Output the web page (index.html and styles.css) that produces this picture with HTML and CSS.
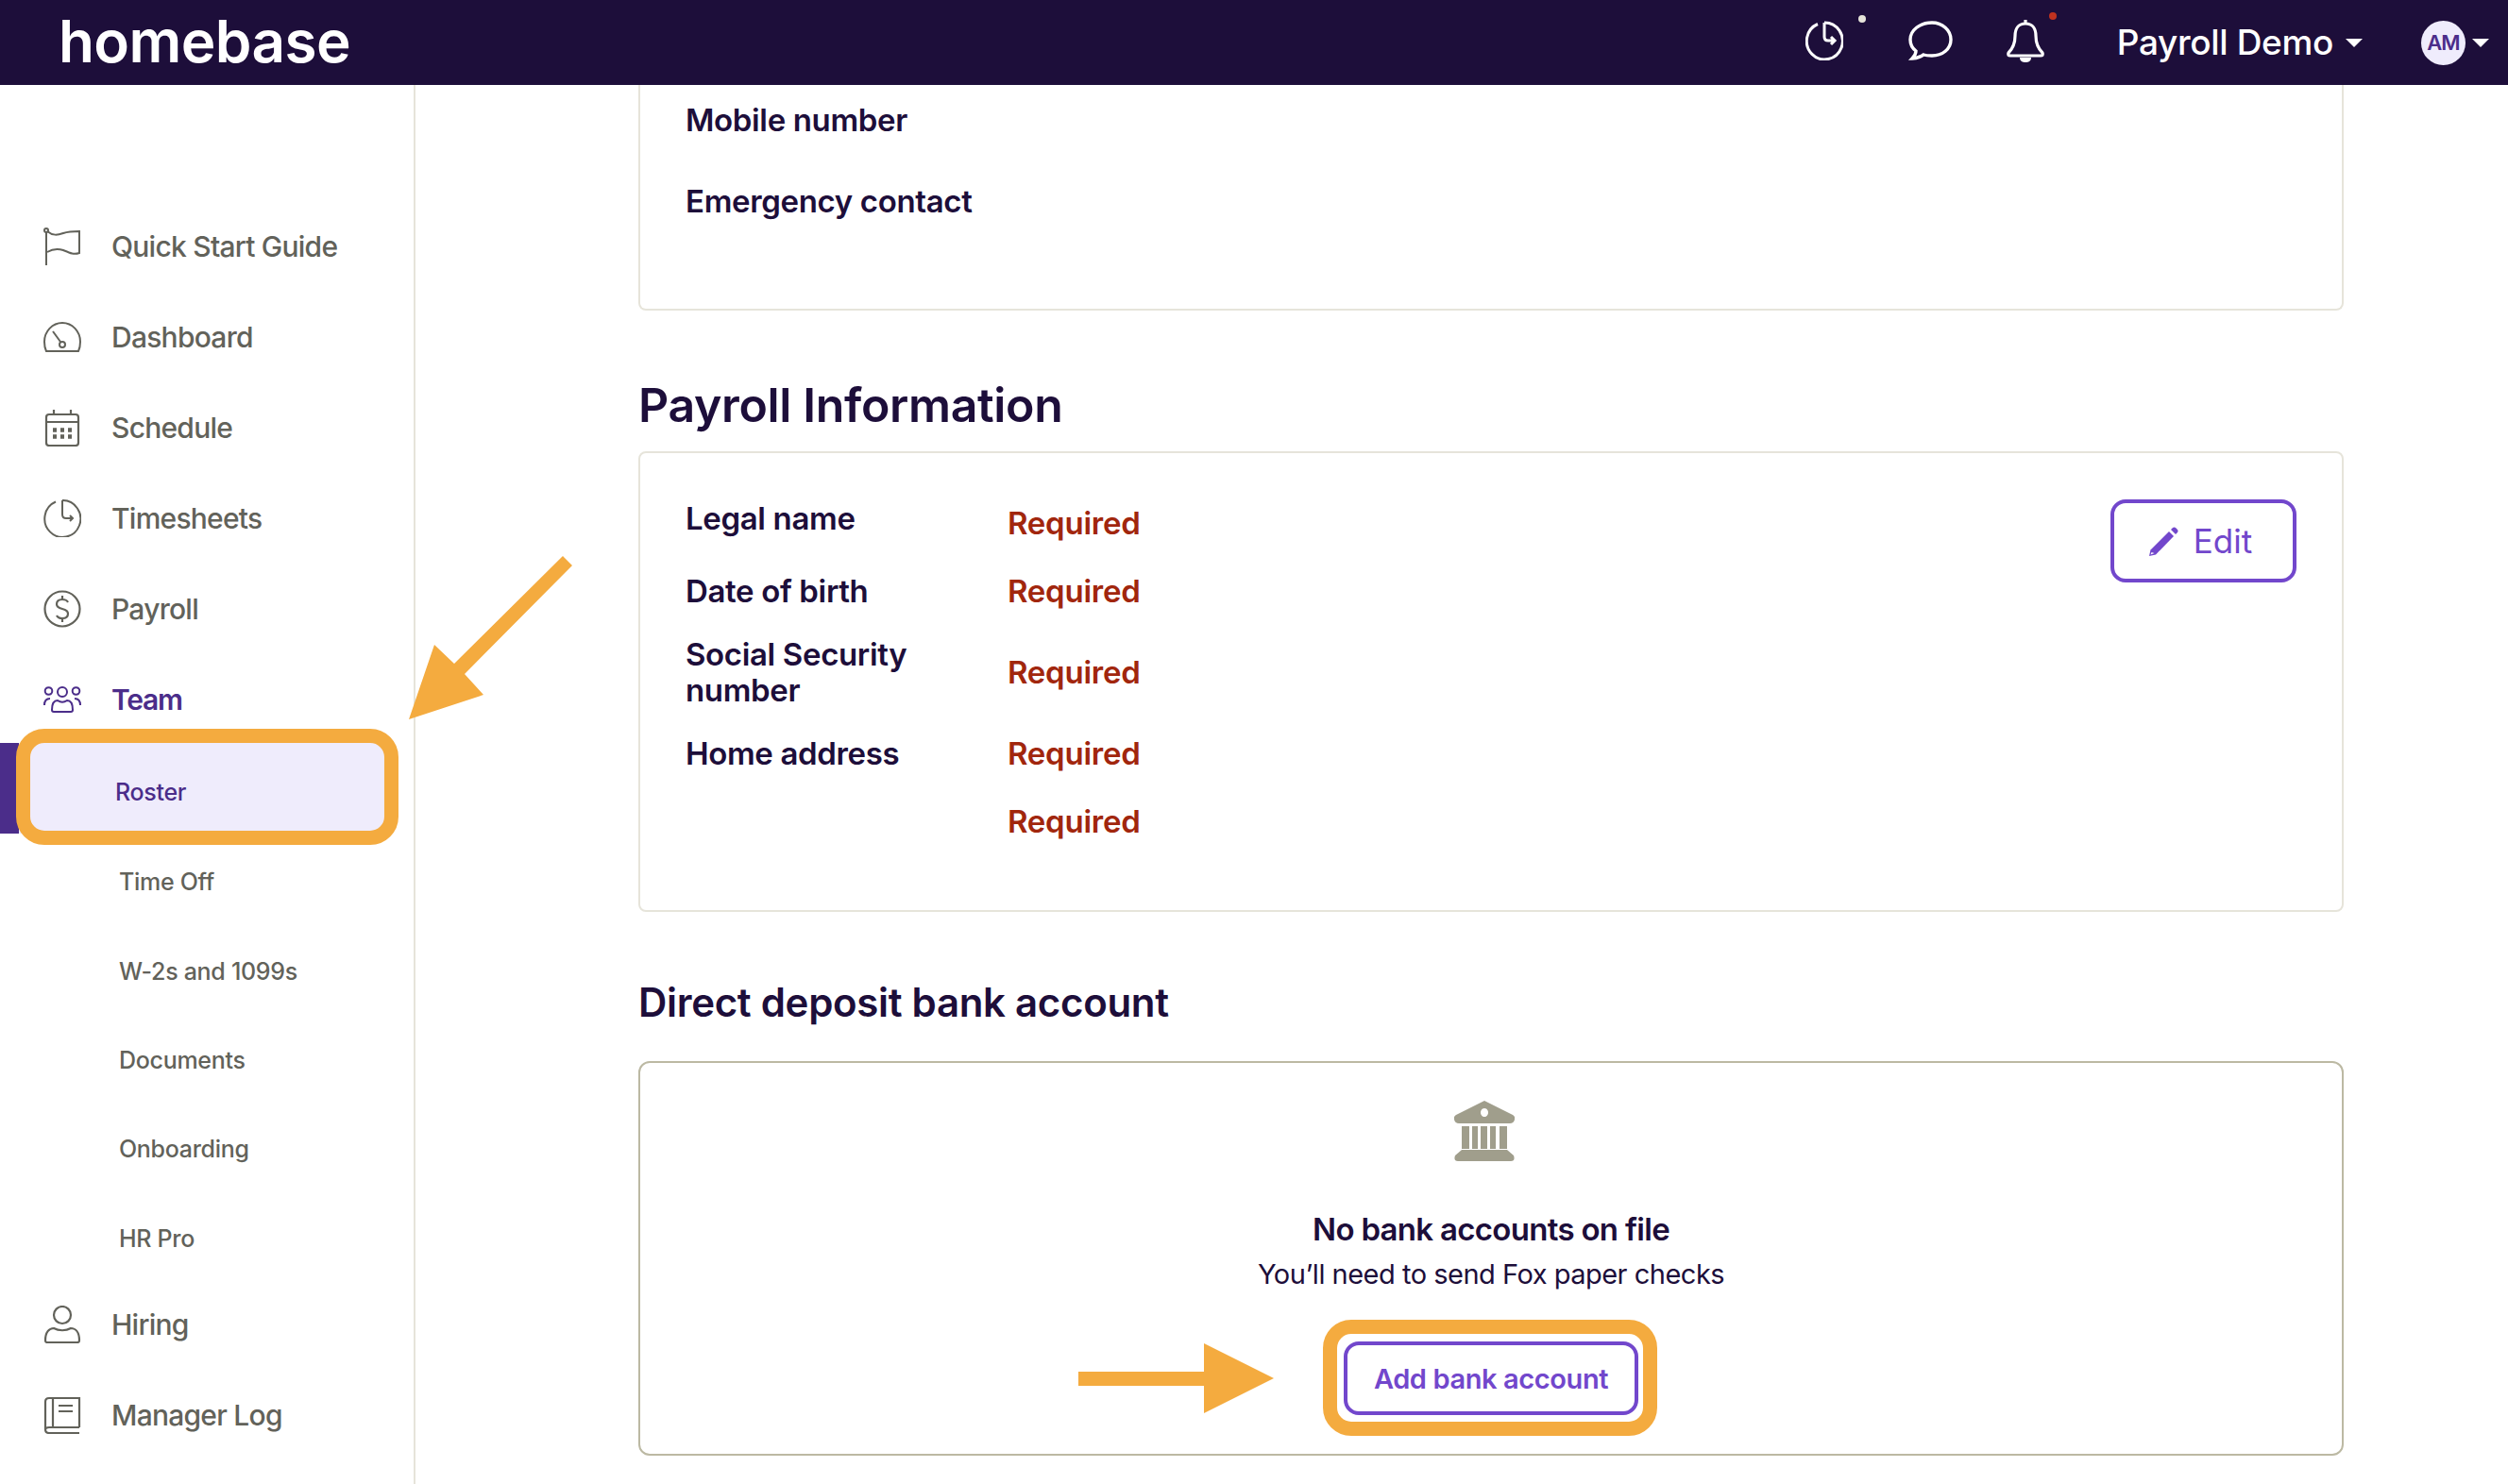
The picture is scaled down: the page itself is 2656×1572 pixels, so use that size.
FILE: index.html
```html
<!DOCTYPE html>
<html lang="en">
<head>
  <meta charset="UTF-8">
  <title>Roster - Payroll Information</title>
  <link rel="stylesheet" href="styles.css">
</head>
<body>

  <header class="topbar">
    <div class="logo">homebase</div>
    <div class="topbar-icons">
      <span class="top-icon clock-icon">
        <svg width="40" height="42" viewBox="0 0 40 42" fill="none" stroke="currentColor" stroke-width="3"><path d="M20 2a19 19.5 0 1 1-7 1.5"/><path d="M20 2v15q0 4 4 4h7M27 17l4 4-4 4"/></svg>
        <i class="dot dot-grey"></i>
      </span>
      <span class="top-icon chat-icon">
        <svg width="48" height="42" viewBox="0 0 48 42" fill="none" stroke="currentColor" stroke-width="3.4"><path d="M26 2C13 2 3 10 3 20c0 5 2 9 6 12 0 3-2 6-4 8 5 0 9-2 12-4 3 1 6 1 9 1 11 0 20-7 20-17S37 2 26 2Z"/></svg>
      </span>
      <span class="top-icon bell-icon">
        <svg width="42" height="48" viewBox="0 0 42 48" fill="none" stroke="currentColor" stroke-width="3.2"><path d="M21 2v4M21 6c-8 0-11 6-11 13 0 8-2 13-7 18-1 2 0 3 2 3h32c2 0 3-1 2-3-5-5-7-10-7-18 0-7-3-13-11-13Z"/><path d="M15 42h12c0 4-3 5-6 5s-6-1-6-5Z" fill="currentColor" stroke="none"/></svg>
        <i class="dot dot-red"></i>
      </span>
      <span class="account-name">Payroll Demo</span>
      <i class="caret"></i>
      <span class="avatar">AM</span>
      <i class="caret caret-last"></i>
    </div>
  </header>

  <div class="page">
    <nav class="sidebar">
      <a class="nav-item">
        <svg class="nav-icon" width="40" height="40" viewBox="0 0 40 40" fill="none" stroke="currentColor" stroke-width="2"><circle cx="3" cy="3" r="2"/><path d="M3 5v35M4 4c6 5 11 4 17 2s12-2 17-2v23c-6 2-10 0-17-3-6-2-12-1-17 2"/></svg>
        Quick Start Guide
      </a>
      <a class="nav-item">
        <svg class="nav-icon" width="40" height="34" viewBox="0 0 40 34" fill="none" stroke="currentColor" stroke-width="2"><path d="M3 32c-1.500-3-2-6-2-10a19 20 0 0 1 38 0c0 4-.5 7-2 10Z"/><path d="M10 11l8 11"/><circle cx="20" cy="25" r="3"/></svg>
        Dashboard
      </a>
      <a class="nav-item">
        <svg class="nav-icon" width="40" height="40" viewBox="0 0 40 40" fill="none" stroke="currentColor" stroke-width="2.200"><rect x="3" y="6" width="34" height="33" rx="3"/><path d="M3 14h34M11 1v5M29 1v5"/><path d="M10 22.500h4M18 22.500h4M26 22.500h4M10 29.500h4M18 29.500h4M26 29.500h4" stroke-width="4.500"/></svg>
        Schedule
      </a>
      <a class="nav-item">
        <svg class="nav-icon" width="40" height="40" viewBox="0 0 40 40" fill="none" stroke="currentColor" stroke-width="2"><path d="M20 1a19 19.500 0 1 1-7 1.500"/><path d="M20 1v15q0 4 4 4h7M28 17l3 3-3 3"/></svg>
        Timesheets
      </a>
      <a class="nav-item">
        <svg class="nav-icon" width="40" height="40" viewBox="0 0 40 40" fill="none" stroke="currentColor" stroke-width="2.200"><circle cx="20" cy="20" r="18.500"/><path d="M26 13c-1-2-3-3-6-3-4 0-6 2-6 5 0 7 12 3 12 10 0 3-2 5-6 5-3 0-5-1-6-3M20 6v4M20 30v4"/></svg>
        Payroll
      </a>
      <a class="nav-item nav-item-team">
        <svg class="nav-icon" width="40" height="28" viewBox="0 0 40 28" fill="none" stroke="currentColor" stroke-width="2"><circle cx="20" cy="6" r="5"/><circle cx="5.500" cy="5" r="3.800"/><circle cx="34.500" cy="5" r="3.800"/><path d="M9 25c0-6 2-10 6-10 3 2 7 2 10 0 4 0 6 4 6 10 0 1-1 2-2 2H11c-1 0-2-1-2-2ZM1 20c0-4 2-7 6-7M39 20c0-4-2-7-6-7"/></svg>
        Team
      </a>

      <ul class="subnav">
        <li class="subnav-item subnav-active"><span class="subnav-fill">Roster</span></li>
        <li class="subnav-item">Time Off</li>
        <li class="subnav-item">W-2s and 1099s</li>
        <li class="subnav-item">Documents</li>
        <li class="subnav-item">Onboarding</li>
        <li class="subnav-item">HR Pro</li>
      </ul>

      <a class="nav-item nav-item-hiring">
        <svg class="nav-icon" width="40" height="40" viewBox="0 0 40 40" fill="none" stroke="currentColor" stroke-width="2.200"><circle cx="20" cy="10" r="9"/><path d="M2 37c0-9 4-13 9-13 5 3 13 3 18 0 5 0 9 4 9 13 0 1-1 2-2 2H4c-1 0-2-1-2-2Z"/></svg>
        Hiring
      </a>
      <a class="nav-item">
        <svg class="nav-icon" width="40" height="40" viewBox="0 0 40 40" fill="none" stroke="currentColor" stroke-width="2.200"><path d="M38 33V2H6Q2 2 2 6v29q0 4 4 4h32M38 33H6q-4 0-4 3M10 2v31M16 10h15M16 16h15"/></svg>
        Manager Log
      </a>
    </nav>

    <main class="content">
      <section class="card card-top">
        <div class="top-label">Mobile number</div>
        <div class="top-label">Emergency contact</div>
      </section>

      <h2 class="heading-large">Payroll Information</h2>
      <section class="card card-payroll">
        <div class="info-grid">
          <div class="info-label info-label-first">Legal name</div><div class="required">Required</div>
          <div class="info-label">Date of birth</div><div class="required">Required</div>
          <div class="info-label info-label-tall">Social Security number</div><div class="required">Required</div>
          <div class="info-label">Home address</div><div class="required">Required</div>
          <div class="info-label"></div><div class="required">Required</div>
        </div>
        <button class="edit-btn">
          <svg width="31" height="31" viewBox="0 0 31 31"><path d="M21 5 1.500 24.500 0 31l7-1.500L26 10Z" fill="currentColor"/><path d="M23 3l1.500-1.500q2-2 4 0l1 1q2 2 0 4L28 8Z" fill="currentColor"/><path d="M2.500 27l3 1-4 1.500Z" fill="#fff"/></svg>
          Edit
        </button>
      </section>

      <h2 class="heading-medium">Direct deposit bank account</h2>
      <section class="card card-bank">
        <svg class="bank-icon" width="64" height="64" viewBox="0 0 64 64"><path fill-rule="evenodd" d="M32 0 62 15q3 2 2 5-1 4-5 4H5q-4 0-5-4-1-3 2-5ZM32 8a4 4.500 0 1 0 .01 0Z"/><path d="M8 27h8v24H8ZM19 27h6v24h-6ZM28 27h7v24h-7ZM38 27h6v24h-6ZM48 27h8v24h-8ZM8 52h48l7 6q2 6-3 6H4q-5 0-3-6Z"/></svg>
        <div class="bank-title">No bank accounts on file</div>
        <div class="bank-sub">You’ll need to send Fox paper checks</div>
        <button class="add-btn">Add bank account</button>
      </section>
    </main>
  </div>

  <!-- orange callouts drawn on top of the screenshot -->
  <div class="callout callout-roster"></div>
  <div class="callout callout-add"></div>
  <svg class="callout-arrows" width="2656" height="1572" viewBox="0 0 2656 1572">
    <path d="M596 589 606 599 492 714 512 736 433 762 460 683 481 703Z"/>
    <path d="M1142 1453H1275V1423L1349 1460 1275 1497V1468H1142Z"/>
  </svg>

</body>
</html>
```

FILE: styles.css
```css
* {
  margin: 0;
  padding: 0;
  box-sizing: border-box;
  font-family: 'Inter', sans-serif;
}

body {
  width: 2656px;
  height: 1572px;
  overflow: hidden;
  background: #fff;
  color: #1d0e3a;
}

ul {
  list-style: none;
}

/* Top bar */
.topbar {
  display: flex;
  align-items: center;
  justify-content: space-between;
  height: 90px;
  padding: 0 20px 0 62px;
  background: #1d0e3a;
  color: #fff;
}

.logo {
  margin-top: -3px;
  font-size: 62px;
  font-weight: 600;
  letter-spacing: -0.6px;
  line-height: 90px;
}

.topbar-icons {
  display: flex;
  align-items: center;
}

.top-icon {
  position: relative;
  display: flex;
  margin-top: -5px;
}

.clock-icon {
  margin-right: 68px;
}

.chat-icon {
  margin-right: 56px;
}

.bell-icon {
  margin-right: 78px;
}

.dot {
  position: absolute;
  top: -6px;
  width: 8px;
  height: 8px;
  border-radius: 50%;
}

.clock-icon .dot {
  left: 56px;
}

.bell-icon .dot {
  left: 46px;
}

.dot-grey {
  background: #e6e4da;
}

.dot-red {
  background: #c0321f;
}

.account-name {
  margin: -2px 0 0 -2px;
  font-size: 37px;
  font-weight: 500;
  letter-spacing: -0.35px;
}

.caret {
  width: 0;
  height: 0;
  margin: 0 62px 0 13px;
  border-left: 9px solid transparent;
  border-right: 9px solid transparent;
  border-top: 9px solid #fff;
}

.caret-last {
  margin: 0 0 0 7px;
}

.avatar {
  display: flex;
  align-items: center;
  justify-content: center;
  width: 47px;
  height: 47px;
  border-radius: 50%;
  background: #efecfc;
  color: #4b2d8a;
  font-size: 22px;
  font-weight: 600;
  letter-spacing: -1px;
}

/* Page */
.page {
  display: flex;
  height: 1482px;
}

.sidebar {
  flex: none;
  width: 440px;
  padding-top: 123px;
  border-right: 2px solid #e6e4da;
}

.nav-item {
  display: flex;
  align-items: center;
  height: 96px;
  padding-left: 46px;
  color: #62625a;
  font-size: 30px;
  font-weight: 500;
  letter-spacing: -0.75px;
}

.nav-icon {
  flex: none;
  margin-right: 32px;
}

.nav-item-team {
  color: #4b2d8a;
  font-weight: 600;
  letter-spacing: -1.2px;
}

.nav-item-hiring {
  margin-top: -4px;
}

.subnav {
  margin-top: -2px;
}

.subnav-item {
  display: flex;
  align-items: center;
  height: 94.4px;
  padding-left: 126px;
  color: #62625a;
  font-size: 25px;
  font-weight: 500;
  letter-spacing: -0.3px;
}

.subnav-active {
  align-items: stretch;
  height: 96px;
  margin-bottom: 4px;
  padding-left: 0;
  border-left: 20px solid #4b2d8a;
  color: #4b2d8a;
}

.subnav-fill {
  display: flex;
  align-items: center;
  width: 388px;
  padding: 8px 0 0 102px;
  background: #efecfc;
}

/* Content */
.content {
  flex: 1;
  padding: 0 174px 0 236px;
}

.card {
  position: relative;
  border: 2px solid #e6e4da;
  border-radius: 8px;
}

.card-top {
  display: flex;
  flex-direction: column;
  gap: 12px;
  height: 239px;
  padding-left: 48px;
  border-top: 0;
  border-radius: 0 0 8px 8px;
}

.top-label {
  display: flex;
  align-items: center;
  height: 74px;
  font-size: 33px;
  font-weight: 600;
  letter-spacing: -0.35px;
}

.heading-large {
  margin: 65px 0 0;
  height: 84px;
  font-size: 50px;
  font-weight: 600;
  letter-spacing: -0.35px;
  line-height: 70px;
}

.card-payroll {
  display: flex;
  justify-content: space-between;
  height: 488px;
  padding: 38px 48px 0 48px;
}

.info-grid {
  display: grid;
  grid-template-columns: 341px auto;
  grid-auto-rows: auto;
  align-content: start;
}

.info-label {
  display: flex;
  align-items: center;
  width: 260px;
  font-size: 33px;
  font-weight: 600;
  letter-spacing: -0.35px;
  line-height: 38px;
  min-height: 72px;
}

.info-label-first {
  padding-bottom: 10px;
}

.info-label-tall {
  min-height: 100px;
}

.required {
  display: flex;
  align-items: center;
  color: #a1260d;
  font-size: 33px;
  font-weight: 600;
  letter-spacing: -0.25px;
}

.edit-btn {
  display: flex;
  align-items: center;
  justify-content: center;
  gap: 16px;
  width: 197px;
  height: 88px;
  margin-top: 11px;
  padding-right: 6px;
  border: 4px solid #7247cc;
  border-radius: 16px;
  background: #fff;
  color: #7247cc;
  font-size: 35px;
  font-weight: 400;
}

.heading-medium {
  margin-top: 68px;
  height: 90px;
  font-size: 42px;
  font-weight: 600;
  letter-spacing: -0.3px;
  line-height: 56px;
}

.card-bank {
  display: flex;
  flex-direction: column;
  align-items: center;
  height: 418px;
  padding-top: 40px;
  border-color: #bcb9a3;
  border-radius: 12px;
}

.bank-icon {
  margin-right: 15px;
  fill: #a09e8c;
}

.bank-title {
  margin-top: 52px;
  font-size: 33px;
  font-weight: 600;
  letter-spacing: -0.7px;
  line-height: 40px;
}

.bank-sub {
  margin-top: 8px;
  font-size: 29px;
  letter-spacing: -0.5px;
  line-height: 40px;
}

.add-btn {
  width: 312px;
  height: 78px;
  margin-top: 51px;
  border: 4px solid #7247cc;
  border-radius: 16px;
  background: #fff;
  color: #7247cc;
  font-size: 29px;
  font-weight: 600;
  letter-spacing: -0.4px;
}

/* Callouts */
.callout {
  position: absolute;
  border: 15px solid #f4ab3f;
  border-radius: 30px;
}

.callout-roster {
  left: 17px;
  top: 772px;
  width: 405px;
  height: 123px;
}

.callout-add {
  left: 1401px;
  top: 1398px;
  width: 354px;
  height: 123px;
}

.callout-arrows {
  position: absolute;
  left: 0;
  top: 0;
  fill: #f4ab3f;
}
```
